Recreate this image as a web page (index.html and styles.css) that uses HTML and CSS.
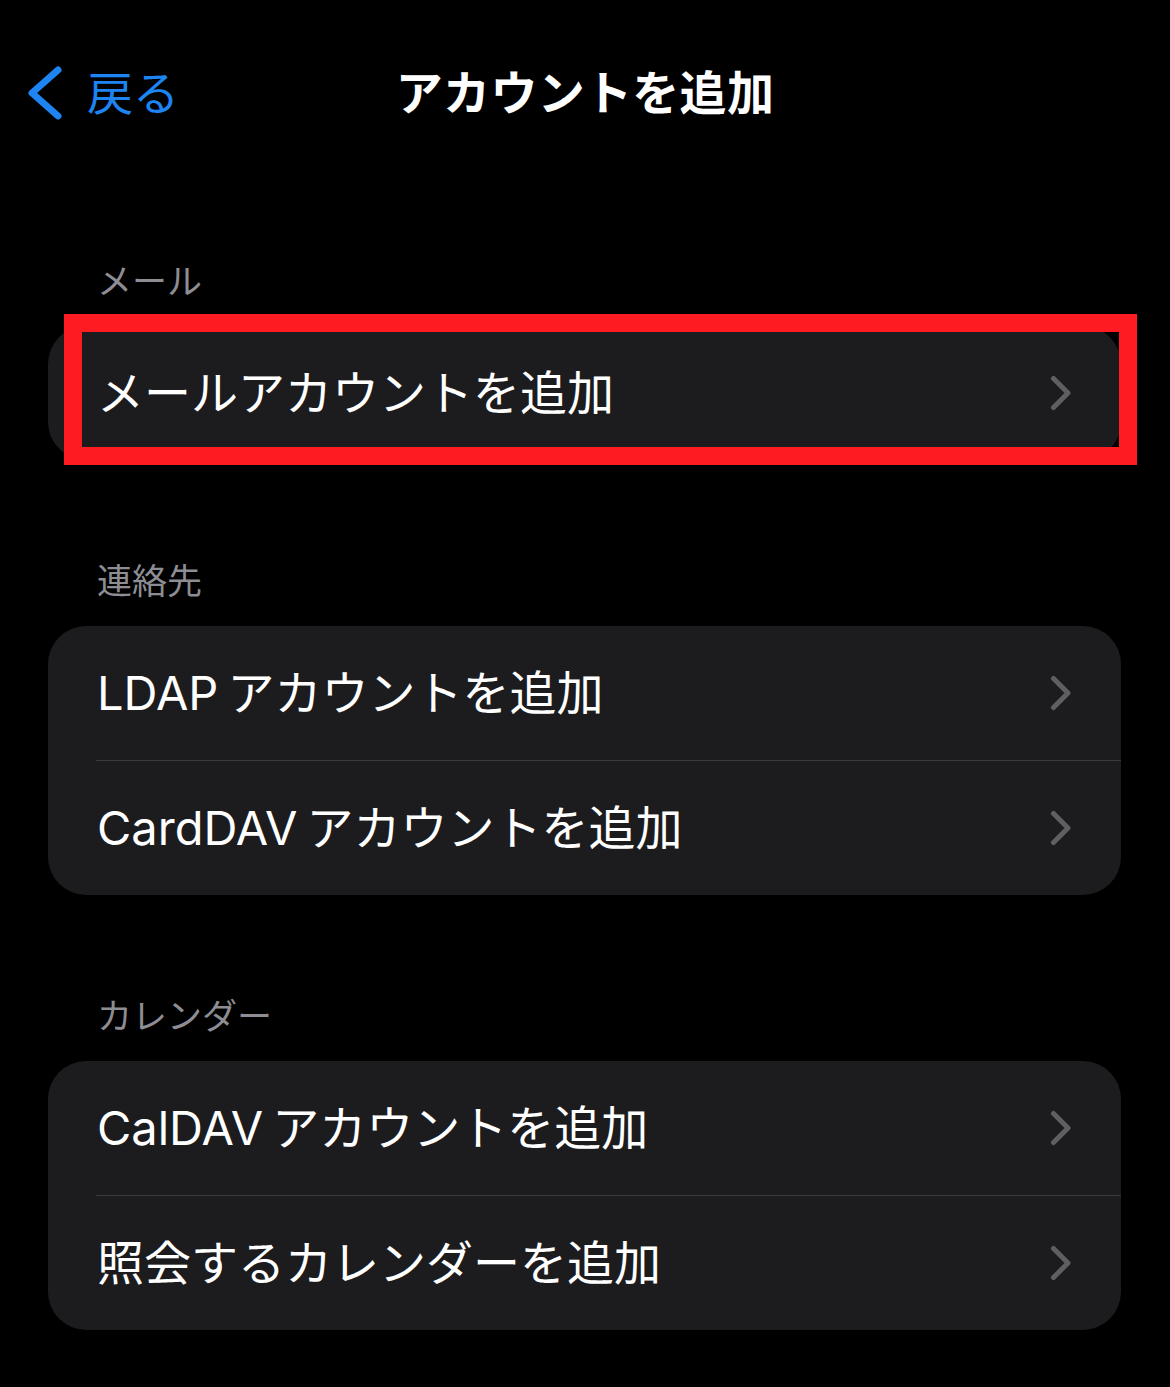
FILE: index.html
```html
<!DOCTYPE html>
<html lang="ja">
<head>
<meta charset="utf-8">
<title>アカウントを追加</title>
<link rel="stylesheet" href="styles.css">
</head>
<body>
<div class="screen">
  <header class="nav">
    <a class="back" href="#">
      <svg class="back-chevron" width="36" height="56" viewBox="0 0 36 56" aria-hidden="true">
        <polyline points="31,5 5,28 31,51" fill="none" stroke="currentColor" stroke-width="7" stroke-linecap="round" stroke-linejoin="round"/>
      </svg>
      <span class="back-label">戻る</span>
    </a>
    <h1 class="nav-title">アカウントを追加</h1>
    <div class="nav-spacer"></div>
  </header>

  <section class="group group-first">
    <h2 class="group-label">メール</h2>
    <div class="card">
      <a class="row" href="#">
        <span class="row-text">メールアカウントを追加</span>
        <svg class="chev" width="22" height="36" viewBox="0 0 22 36" aria-hidden="true"><polyline points="3.5,3.5 18,18 3.5,32.5" fill="none" stroke="currentColor" stroke-width="5" stroke-linecap="round" stroke-linejoin="round"/></svg>
      </a>
      <div class="highlight"></div>
    </div>
  </section>

  <section class="group">
    <h2 class="group-label">連絡先</h2>
    <div class="card">
      <a class="row" href="#">
        <span class="row-text">LDAP アカウントを追加</span>
        <svg class="chev" width="22" height="36" viewBox="0 0 22 36" aria-hidden="true"><polyline points="3.5,3.5 18,18 3.5,32.5" fill="none" stroke="currentColor" stroke-width="5" stroke-linecap="round" stroke-linejoin="round"/></svg>
      </a>
      <div class="sep"></div>
      <a class="row" href="#">
        <span class="row-text">CardDAV アカウントを追加</span>
        <svg class="chev" width="22" height="36" viewBox="0 0 22 36" aria-hidden="true"><polyline points="3.5,3.5 18,18 3.5,32.5" fill="none" stroke="currentColor" stroke-width="5" stroke-linecap="round" stroke-linejoin="round"/></svg>
      </a>
    </div>
  </section>

  <section class="group">
    <h2 class="group-label">カレンダー</h2>
    <div class="card">
      <a class="row" href="#">
        <span class="row-text">CalDAV アカウントを追加</span>
        <svg class="chev" width="22" height="36" viewBox="0 0 22 36" aria-hidden="true"><polyline points="3.5,3.5 18,18 3.5,32.5" fill="none" stroke="currentColor" stroke-width="5" stroke-linecap="round" stroke-linejoin="round"/></svg>
      </a>
      <div class="sep"></div>
      <a class="row" href="#">
        <span class="row-text">照会するカレンダーを追加</span>
        <svg class="chev" width="22" height="36" viewBox="0 0 22 36" aria-hidden="true"><polyline points="3.5,3.5 18,18 3.5,32.5" fill="none" stroke="currentColor" stroke-width="5" stroke-linecap="round" stroke-linejoin="round"/></svg>
      </a>
    </div>
  </section>
</div>
</body>
</html>
```

FILE: styles.css
```css
html, body {
  margin: 0;
  padding: 0;
  background: #000;
}

body {
  font-family: Inter, "Noto Sans CJK JP", sans-serif;
  color: #fff;
  -webkit-font-smoothing: antialiased;
}

.screen {
  width: 1170px;
  min-height: 1387px;
  overflow: hidden;
}

/* navigation bar */
.nav {
  height: 186px;
  display: grid;
  grid-template-columns: 1fr auto 1fr;
  align-items: center;
}

.back {
  display: flex;
  align-items: center;
  gap: 24px;
  padding-left: 27px;
  color: #1e84f2;
  text-decoration: none;
}

.back-chevron {
  display: block;
}

.back-label {
  font-size: 46px;
  line-height: 56px;
  font-weight: 400;
}

.nav-title {
  margin: 0;
  font-size: 47px;
  line-height: 56px;
  font-weight: 700;
  color: #fff;
  letter-spacing: 0.3px;
}

/* grouped list */
.group {
  margin: 0 49px 0 48px;
  padding-top: 99px;
}

.group-first {
  padding-top: 73px;
}

.group-label {
  margin: 0 0 23px 49px;
  font-size: 35px;
  line-height: 44px;
  font-weight: 400;
  color: #8d8d93;
}

.card {
  position: relative;
  background: #1c1c1e;
  border-radius: 38px;
}

.row {
  height: 134px;
  display: flex;
  align-items: center;
  justify-content: space-between;
  padding: 0 49px 0 49px;
  color: #fff;
  text-decoration: none;
}

.row-text {
  font-size: 47px;
  line-height: 60px;
  font-weight: 400;
  white-space: nowrap;
  word-spacing: -4px;
}

.chev {
  display: block;
  color: #5e5e63;
}

.sep {
  height: 1px;
  margin-left: 48px;
  background: #3a3a3d;
}

/* red annotation frame drawn over the first row */
.highlight {
  position: absolute;
  left: 16px;
  top: -12px;
  width: 1073px;
  height: 151px;
  box-sizing: border-box;
  border: 18px solid #fe1b22;
  pointer-events: none;
}
```
